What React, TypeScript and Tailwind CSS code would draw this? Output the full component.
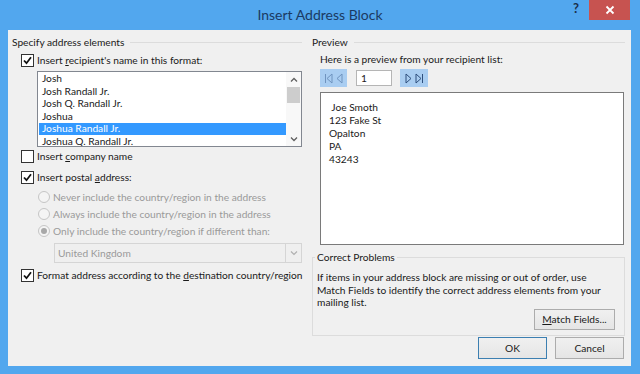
import React from "react";

function Check({ checked }: { checked: boolean }) {
  return (
    <div className="w-[13px] h-[13px] border border-[#333333] bg-white flex items-center justify-center shrink-0">
      {checked && (
        <svg width="11" height="11" viewBox="0 0 11 11">
          <path d="M2 5.5 L4.5 8.2 L9 2.3" fill="none" stroke="#111" strokeWidth="1.8" />
        </svg>
      )}
    </div>
  );
}

function Radio({ selected }: { selected?: boolean }) {
  return (
    <div className="w-[12px] h-[12px] rounded-full border border-[#c5c5c5] bg-[#f4f4f4] flex items-center justify-center shrink-0">
      {selected && <div className="w-[6px] h-[6px] rounded-full bg-[#a8a8a8]" />}
    </div>
  );
}

function Header({ text }: { text: string }) {
  return (
    <div className="mt-[5px] h-[14px] flex items-center pl-[4px] pr-[6px]">
      <span className="text-[#1a1a1a]">{text}</span>
      <div className="flex-1 h-px bg-[#dcdcdc] ml-[6px]" />
    </div>
  );
}

const items = [
  "Josh",
  "Josh Randall Jr.",
  "Josh Q. Randall Jr.",
  "Joshua",
  "Joshua Randall Jr.",
  "Joshua Q. Randall Jr.",
];

export default function App() {
  return (
    <div className="w-[640px] h-[374px] bg-[#52a7ee] flex flex-col font-['Lato',sans-serif] text-[10.2px] leading-[13px] text-[#1a1a1a] whitespace-nowrap">
      <div className="h-[30px] relative flex items-center justify-center">
        <span className="text-[14px] text-[#1b3a63] pb-[2px]">Insert Address Block</span>
        <span className="absolute left-[573px] top-[2px] text-[13px] font-bold text-[#1b2f4a]">?</span>
        <div className="absolute left-[589px] top-0 w-[41px] h-[20px] bg-[#c75350] flex items-center justify-center">
          <svg width="10" height="10" viewBox="0 0 10 10">
            <path d="M1.5 1.5 L8.5 8.5 M8.5 1.5 L1.5 8.5" stroke="#fff" strokeWidth="1.8" />
          </svg>
        </div>
      </div>
      <div className="ml-[8px] mr-[9px] h-[336px] bg-[#f0f0f0] flex">
        {/* Left column */}
        <div className="w-[300px] flex flex-col">
          <Header text="Specify address elements" />
          <div className="mt-[4px] h-[14px] flex items-center pl-[13px] gap-[3px]">
            <Check checked />
            <span>
              Insert <span className="underline">r</span>ecipient's name in this format:
            </span>
          </div>
          <div className="mt-[4px] ml-[29px] w-[265px] h-[76px] border border-[#828790] bg-white flex">
            <div className="flex-1 pt-[0.5px] pl-[1px] overflow-hidden">
              {items.map((it, i) => (
                <div
                  key={it}
                  className={
                    i === 4
                      ? "h-[12.5px] flex items-center pl-[3px] bg-[#3399ff] text-white"
                      : "h-[12.5px] flex items-center pl-[3px]"
                  }
                >
                  {it}
                </div>
              ))}
            </div>
            <div className="w-[15px] bg-[#f8f8f8] flex flex-col">
              <div className="h-[15px] flex items-center justify-center">
                <svg width="8" height="6" viewBox="0 0 8 6">
                  <path d="M1 4.5 L4 1.5 L7 4.5" fill="none" stroke="#606060" strokeWidth="1.3" />
                </svg>
              </div>
              <div className="mx-[1px] h-[16px] bg-[#cdcdcd]" />
              <div className="flex-1" />
              <div className="h-[15px] flex items-center justify-center">
                <svg width="8" height="6" viewBox="0 0 8 6">
                  <path d="M1 1.5 L4 4.5 L7 1.5" fill="none" stroke="#606060" strokeWidth="1.3" />
                </svg>
              </div>
            </div>
          </div>
          <div className="mt-[2px] h-[14px] flex items-center pl-[13px] gap-[3px]">
            <Check checked={false} />
            <span>
              Insert <span className="underline">c</span>ompany name
            </span>
          </div>
          <div className="mt-[7px] h-[14px] flex items-center pl-[13px] gap-[3px]">
            <Check checked />
            <span>
              Insert postal <span className="underline">a</span>ddress:
            </span>
          </div>
          <div className="mt-[6px] h-[14px] flex items-center pl-[30px] gap-[3px] text-[#9a9a9a]">
            <Radio />
            <span>Never include the country/region in the address</span>
          </div>
          <div className="mt-[3px] h-[14px] flex items-center pl-[30px] gap-[3px] text-[#9a9a9a]">
            <Radio />
            <span>Always include the country/region in the address</span>
          </div>
          <div className="mt-[3px] h-[14px] flex items-center pl-[30px] gap-[3px] text-[#9a9a9a]">
            <Radio selected />
            <span>Only include the country/region if different than:</span>
          </div>
          <div className="mt-[5px] ml-[46px] w-[248px] h-[20px] border border-[#d5d5d5] bg-[#efefef] flex items-center">
            <span className="flex-1 pl-[3px] text-[#9a9a9a]">United Kingdom</span>
            <div className="w-[16px] h-full border-l border-[#d5d5d5] flex items-center justify-center">
              <svg width="8" height="6" viewBox="0 0 8 6">
                <path d="M1 1.5 L4 4.5 L7 1.5" fill="none" stroke="#b0b0b0" strokeWidth="1.2" />
              </svg>
            </div>
          </div>
          <div className="mt-[5px] h-[14px] flex items-center pl-[13px] gap-[3px]">
            <Check checked />
            <span>
              Format address according to the <span className="underline">d</span>estination country/region
            </span>
          </div>
        </div>

        {/* Right column */}
        <div className="flex-1 flex flex-col">
          <Header text="Preview" />
          <div className="mt-[3px] h-[14px] flex items-center pl-[12px]">
            Here is a preview from your recipient list:
          </div>
          <div className="mt-[3px] h-[18px] flex items-center pl-[12px]">
            <div className="w-[27px] h-[18px] bg-[#a9cdf1] flex items-center justify-center gap-[3px]">
              <svg width="9" height="11" viewBox="0 0 9 11">
                <path d="M1.5 1 L1.5 10 M8 1 L3 5.5 L8 10 Z" fill="none" stroke="#6f93be" strokeWidth="1" />
              </svg>
              <svg width="7" height="11" viewBox="0 0 7 11">
                <path d="M6 1 L1 5.5 L6 10 Z" fill="none" stroke="#6f93be" strokeWidth="1" />
              </svg>
            </div>
            <div className="ml-[9px] w-[36px] h-[16px] border border-[#b5b5b5] bg-white flex items-center pl-[4px]">
              1
            </div>
            <div className="ml-[8px] w-[28px] h-[18px] bg-[#a9cdf1] flex items-center justify-center gap-[3px]">
              <svg width="7" height="11" viewBox="0 0 7 11">
                <path d="M1 1 L6 5.5 L1 10 Z" fill="none" stroke="#2e4f7c" strokeWidth="1" />
              </svg>
              <svg width="9" height="11" viewBox="0 0 9 11">
                <path d="M1 1 L6 5.5 L1 10 Z M7.5 1 L7.5 10" fill="none" stroke="#2e4f7c" strokeWidth="1" />
              </svg>
            </div>
          </div>
          <div className="mt-[5px] ml-[12px] w-[304px] h-[153px] border border-[#7a7a7a] bg-white pt-[8px] pl-[8px] flex flex-col">
            <div className="h-[13px]">&nbsp;Joe Smoth</div>
            <div className="h-[13px]">123 Fake St</div>
            <div className="h-[13px]">Opalton</div>
            <div className="h-[13px]">PA</div>
            <div className="h-[13px]">43243</div>
          </div>
          <fieldset className="mt-[6px] ml-[4px] w-[313px] h-[85px] border border-[#dcdcdc] flex flex-col">
            <legend className="ml-[2px] px-[2px]">Correct Problems</legend>
            <div className="mt-[7px] pl-[4px] flex flex-col">
              <div className="h-[12.5px] leading-[12.5px]">If items in your address block are missing or out of order, use</div>
              <div className="h-[12.5px] leading-[12.5px]">Match Fields to identify the correct address elements from your</div>
              <div className="h-[12.5px] leading-[12.5px]">mailing list.</div>
            </div>
            <div className="flex justify-end pr-[9px]">
              <div className="w-[81px] h-[21px] border border-[#acacac] bg-gradient-to-b from-[#f0f0f0] to-[#e5e5e5] flex items-center justify-center">
                <span>
                  <span className="underline">M</span>atch Fields...
                </span>
              </div>
            </div>
          </fieldset>
          <div className="mt-[1px] flex justify-end gap-[8px] pr-[7px]">
            <div className="w-[69px] h-[22px] border border-[#3c7fb1] bg-gradient-to-b from-[#f0f0f0] to-[#e5e5e5] flex items-center justify-center">
              OK
            </div>
            <div className="w-[69px] h-[22px] border border-[#acacac] bg-gradient-to-b from-[#f0f0f0] to-[#e5e5e5] flex items-center justify-center">
              Cancel
            </div>
          </div>
        </div>
      </div>
    </div>
  );
}
